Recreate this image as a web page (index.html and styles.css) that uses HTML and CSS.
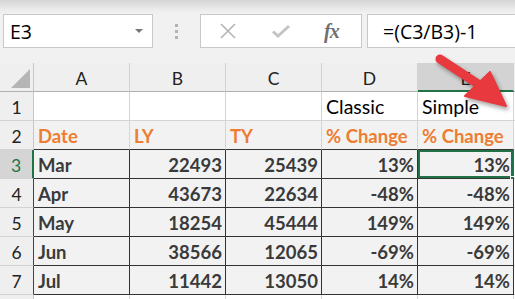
FILE: index.html
```html
<!DOCTYPE html>
<html>
<head>
<meta charset="utf-8">
<link rel="stylesheet" href="styles.css">
</head>
<body>
<div class="app">
  <div class="topstrip"></div>
  <div class="toolbar">
    <div class="namebox">
      <span class="name">E3</span>
      <span class="caret"></span>
    </div>
    <div class="grip"><i></i><i></i><i></i></div>
    <div class="btnbox">
      <svg class="ico" width="20" height="20" viewBox="0 0 20 20"><path d="M3 3 L17 17 M17 3 L3 17" stroke="#b4b4b4" stroke-width="1.6" fill="none"/></svg>
      <svg class="ico" width="20" height="20" viewBox="0 0 20 20"><path d="M2 10.5 L7 15 L18 5" stroke="#c4c4c4" stroke-width="3" fill="none" stroke-linejoin="miter"/></svg>
      <span class="fx">fx</span>
    </div>
    <div class="formula">=(C3/B3)-1</div>
  </div>
  <div class="sheet">
    <div class="corner"><span class="tri"></span></div>
    <div class="colh">A</div>
    <div class="colh">B</div>
    <div class="colh">C</div>
    <div class="colh">D</div>
    <div class="colh sel">E</div>
    <div class="colh rest"></div>

    <div class="rowh">1</div>
    <div class="c r1"></div>
    <div class="c r1"></div>
    <div class="c r1"></div>
    <div class="c r1 txt">Classic</div>
    <div class="c r1 txt">Simple</div>
    <div class="c r1"></div>

    <div class="rowh">2</div>
    <div class="c r2 hd">Date</div>
    <div class="c r2 hd">LY</div>
    <div class="c r2 hd">TY</div>
    <div class="c r2 hd">% Change</div>
    <div class="c r2 hd">% Change</div>
    <div class="c r1 plain"></div>

    <div class="rowh selrow">3</div>
    <div class="c t">Mar</div>
    <div class="c t n">22493</div>
    <div class="c t n">25439</div>
    <div class="c t n">13%</div>
    <div class="c t n active">13%<span class="handle"></span></div>
    <div class="c r1 plain"></div>

    <div class="rowh dk">4</div>
    <div class="c t">Apr</div>
    <div class="c t n">43673</div>
    <div class="c t n">22634</div>
    <div class="c t n">-48%</div>
    <div class="c t n">-48%</div>
    <div class="c r1 plain"></div>

    <div class="rowh dk">5</div>
    <div class="c t">May</div>
    <div class="c t n">18254</div>
    <div class="c t n">45444</div>
    <div class="c t n">149%</div>
    <div class="c t n">149%</div>
    <div class="c r1 plain"></div>

    <div class="rowh dk">6</div>
    <div class="c t">Jun</div>
    <div class="c t n">38566</div>
    <div class="c t n">12065</div>
    <div class="c t n">-69%</div>
    <div class="c t n">-69%</div>
    <div class="c r1 plain"></div>

    <div class="rowh dk">7</div>
    <div class="c t">Jul</div>
    <div class="c t n">11442</div>
    <div class="c t n">13050</div>
    <div class="c t n">14%</div>
    <div class="c t n">14%</div>
    <div class="c r1 plain"></div>

    <div class="rowh"></div>
    <div class="c r1"></div>
    <div class="c r1"></div>
    <div class="c r1"></div>
    <div class="c r1"></div>
    <div class="c r1"></div>
    <div class="c r1"></div>
  </div>
  <svg class="arrow" width="515" height="299" viewBox="0 0 515 299">
    <g fill="#e8393f" stroke="#e8393f">
      <line x1="440" y1="59" x2="478" y2="84" stroke-width="9" stroke-linecap="round"/>
      <polygon points="490,72 465,96 506,106" stroke-width="2" stroke-linejoin="round"/>
    </g>
  </svg>
</div>
</body>
</html>
```

FILE: styles.css
```css
* { box-sizing: border-box; }
html, body { margin: 0; padding: 0; }
body {
  width: 515px;
  height: 299px;
  overflow: hidden;
  background: #f1f1f1;
}
.app {
  position: relative;
  width: 515px;
  height: 299px;
  overflow: hidden;
}
.topstrip {
  height: 14px;
  background: linear-gradient(#d4d4d4, #ececec 70%, #f1f1f1);
}
.toolbar {
  display: flex;
  align-items: stretch;
  height: 34px;
  padding-left: 3px;
  margin-bottom: 15px;
}
.namebox {
  width: 150px;
  background: #fff;
  border: 1px solid #c8c8c8;
  display: flex;
  align-items: center;
  justify-content: space-between;
  padding: 0 9px 0 6px;
}
.name, .formula {
  font-family: "Open Sans", "Noto Sans", sans-serif;
  font-size: 19.5px;
  color: #000;
}
.caret {
  width: 0;
  height: 0;
  border-left: 4px solid transparent;
  border-right: 4px solid transparent;
  border-top: 4px solid #777;
}
.grip {
  width: 47px;
  display: flex;
  flex-direction: column;
  align-items: center;
  justify-content: center;
  gap: 3px;
}
.grip i {
  width: 3px;
  height: 3px;
  background: #b4b4b4;
}
.btnbox {
  width: 162px;
  background: #fff;
  border: 1px solid #c8c8c8;
  display: flex;
  align-items: center;
  padding-left: 17px;
  gap: 33px;
}
.fx {
  font-family: "Liberation Serif", "DejaVu Serif", serif;
  font-style: italic;
  font-weight: bold;
  font-size: 20px;
  color: #707070;
  letter-spacing: -1px;
}
.formula {
  margin-left: 5px;
  flex: 1;
  background: #fff;
  border: 1px solid #c8c8c8;
  border-right: none;
  display: flex;
  align-items: center;
  padding-left: 15px;
}
.sheet {
  display: grid;
  grid-template-columns: 34px 96px 96px 96px 96px 96px 1fr;
  grid-auto-rows: 29px;
  font-family: Lato, "Open Sans", sans-serif;
}
.corner {
  position: relative;
  background: #efefef;
  border-right: 1px solid #c6c6c6;
  border-bottom: 1px solid #b0b0b0;
}
.tri {
  position: absolute;
  right: 3px;
  bottom: 3px;
  width: 0;
  height: 0;
  border-left: 19px solid transparent;
  border-bottom: 19px solid #b5b5b5;
}
.colh {
  background: #efefef;
  border-right: 1px solid #d2d2d2;
  border-bottom: 1px solid #b0b0b0;
  display: flex;
  justify-content: center;
  align-items: flex-end;
  padding-bottom: 2px;
  font-size: 17.5px;
  color: #222;
}
.colh.sel {
  background: #d3d3d3;
  border-bottom: 2px solid #217346;
  padding-bottom: 1px;
}
.colh.rest { border-right: none; }
.rowh {
  background: #efefef;
  border-right: 1px solid #c6c6c6;
  border-bottom: 1px solid #d2d2d2;
  display: flex;
  justify-content: center;
  align-items: flex-end;
  padding-bottom: 2px;
  font-size: 17.5px;
  color: #222;
}
.rowh.selrow {
  background: #d5d5d5;
  color: #217346;
  border-right: 2px solid #217346;
}
.rowh.dk { border-right: 1px solid #444; }
.c {
  position: relative;
  border-right: 1px solid #d4d4d4;
  border-bottom: 1px solid #d4d4d4;
  display: flex;
  align-items: flex-end;
  padding: 0 3px 2px 4px;
  font-size: 18.5px;
  white-space: nowrap;
}
.r1 { background: #fff; }
.txt {
  color: #000;
  font-size: 19.5px;
}
.r2 {
  background: #f2f2f2;
  border-bottom: 1px solid #333;
}
.hd {
  color: #ed7d31;
  font-weight: bold;
}
.c.t {
  background: #f2f2f2;
  border-right: 1px solid #333;
  border-bottom: 1px solid #333;
  color: #3a3a3a;
  font-weight: bold;
}
.c.n { justify-content: flex-end; }
.c.active {
  box-shadow: inset 0 0 0 2px #217346;
  border-right-color: #217346;
}
.handle {
  position: absolute;
  right: -3px;
  bottom: -4px;
  width: 6px;
  height: 6px;
  background: #217346;
  border: 1px solid #fff;
}
.arrow {
  position: absolute;
  left: 0;
  top: 0;
  filter: drop-shadow(2px 3px 2px rgba(0,0,0,0.35));
}
```
